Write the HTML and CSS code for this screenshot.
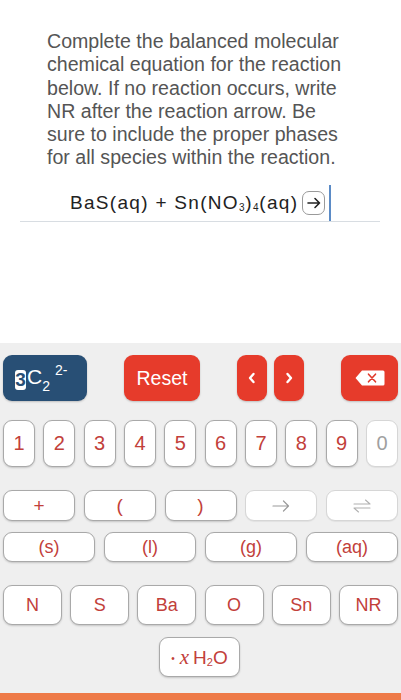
FILE: index.html
```html
<!DOCTYPE html>
<html>
<head>
<meta charset="utf-8">
<link rel="stylesheet" href="styles.css">
</head>
<body>
<div class="page">
  <div class="question">
    <p class="prompt">Complete the balanced molecular chemical equation for the reaction below. If no reaction occurs, write NR after the reaction arrow. Be sure to include the proper phases for all species within the reaction.</p>
    <div class="equation-wrap">
      <div class="equation">
        <span class="eq-text">BaS(aq) + Sn(NO<sub class="sm">3</sub>)<sub class="sm">4</sub>(aq)</span>
        <span class="arrow-box">
          <svg width="14" height="12" viewBox="0 0 14 12"><path d="M1 6 H12.5 M8 1.5 L12.5 6 L8 10.5" fill="none" stroke="#222" stroke-width="1.6" stroke-linecap="round" stroke-linejoin="round"/></svg>
        </span>
        <span class="cursor"></span>
      </div>
    </div>
  </div>

  <div class="keyboard">
    <div class="row row-top">
      <button class="key dark charge"><span class="charge-in"><span class="hl">3</span>C<sub class="csub">2</sub><sup class="csup">2-</sup></span></button>
      <button class="key red reset">Reset</button>
      <div class="nav">
        <button class="key red chev">
          <svg width="10" height="12" viewBox="0 0 10 12"><path d="M6.5 2 L3 6 L6.5 10" fill="none" stroke="#fff" stroke-width="2.4" stroke-linecap="round" stroke-linejoin="round"/></svg>
        </button>
        <button class="key red chev">
          <svg width="10" height="12" viewBox="0 0 10 12"><path d="M3.5 2 L7 6 L3.5 10" fill="none" stroke="#fff" stroke-width="2.4" stroke-linecap="round" stroke-linejoin="round"/></svg>
        </button>
      </div>
      <button class="key red bksp">
        <svg width="30" height="16" viewBox="0 0 30 16"><path d="M7 0.5 H28 a1.5 1.5 0 0 1 1.5 1.5 V14 a1.5 1.5 0 0 1 -1.5 1.5 H7 L0.5 8 Z" fill="#fff"/><path d="M13.5 4.2 L20.5 11.8 M20.5 4.2 L13.5 11.8" stroke="#e0392b" stroke-width="1.6" stroke-linecap="round"/></svg>
      </button>
    </div>

    <div class="row row-digits">
      <button class="key w digit">1</button>
      <button class="key w digit">2</button>
      <button class="key w digit">3</button>
      <button class="key w digit">4</button>
      <button class="key w digit">5</button>
      <button class="key w digit">6</button>
      <button class="key w digit">7</button>
      <button class="key w digit">8</button>
      <button class="key w digit">9</button>
      <button class="key w digit off">0</button>
    </div>

    <div class="row row-ops">
      <button class="key w op">+</button>
      <button class="key w op">(</button>
      <button class="key w op">)</button>
      <button class="key w op off">
        <svg width="18" height="12" viewBox="0 0 18 12"><path d="M1 6 H16.5 M11.5 1 L16.5 6 L11.5 11" fill="none" stroke="#9a9a9a" stroke-width="1.2" stroke-linecap="round" stroke-linejoin="round"/></svg>
      </button>
      <button class="key w op off">
        <svg width="18" height="14" viewBox="0 0 18 14"><path d="M1 5 H17 L12.5 1 M17 9 H1 L5.5 13" fill="none" stroke="#b0b0b0" stroke-width="1.1" stroke-linecap="round" stroke-linejoin="round"/></svg>
      </button>
    </div>

    <div class="row row-phase">
      <button class="key w phase">(s)</button>
      <button class="key w phase">(l)</button>
      <button class="key w phase">(g)</button>
      <button class="key w phase">(aq)</button>
    </div>

    <div class="row row-el">
      <button class="key w el">N</button>
      <button class="key w el">S</button>
      <button class="key w el">Ba</button>
      <button class="key w el">O</button>
      <button class="key w el">Sn</button>
      <button class="key w el">NR</button>
    </div>

    <div class="row row-water">
      <button class="key w water"><span class="water-in"><span class="dot">•</span><i class="x">x</i>H<sub class="wsub">2</sub>O</span></button>
    </div>
  </div>
  <div class="bottom-bar"></div>
</div>
</body>
</html>
```

FILE: styles.css
```css
* { box-sizing: border-box; }
html, body { margin: 0; padding: 0; }
body {
  width: 401px;
  height: 700px;
  overflow: hidden;
  font-family: "Liberation Sans", Arial, sans-serif;
  background: #fff;
}
.page {
  display: flex;
  flex-direction: column;
  height: 700px;
}
.question {
  height: 343px;
  background: #fff;
  padding-top: 30px;
}
.prompt {
  margin: 0 0 0 47px;
  width: 302px;
  font-size: 19.6px;
  line-height: 23.3px;
  color: #555;
}
.equation-wrap {
  margin: 14px 21px 0 20px;
  border-bottom: 1px solid #d8dde2;
  height: 38px;
  display: flex;
  align-items: center;
  padding-top: 2px;
}
.equation {
  margin-left: 50px;
  display: flex;
  align-items: center;
}
.eq-text {
  font-size: 19px;
  color: #222;
  letter-spacing: 1.3px;
}
.sm { font-size: 10px; vertical-align: -2px; letter-spacing: 0.8px; }
.arrow-box {
  margin-left: 4px;
  width: 23px;
  height: 24px;
  border: 1px solid #9a9a9a;
  border-radius: 7px;
  display: flex;
  align-items: center;
  justify-content: center;
}
.cursor {
  margin-left: 4px;
  width: 2px;
  height: 36px;
  background: #5b8bc6;
}
.keyboard {
  flex: 1;
  background: #efefef;
  padding: 12px 3px 0 3px;
}
.row {
  display: flex;
  justify-content: space-between;
}
.key {
  font-family: "Liberation Sans", Arial, sans-serif;
  border-radius: 9px;
  padding: 0;
  display: flex;
  align-items: center;
  justify-content: center;
  cursor: pointer;
}
.dark {
  background: #284f75;
  border: none;
  color: #fff;
  box-shadow: 0 1px 2px rgba(0,0,0,0.2);
}
.red {
  background: #e63b2b;
  border: none;
  color: #fff;
  box-shadow: 0 1px 2px rgba(0,0,0,0.2);
}
.w {
  background: #fff;
  border: 1px solid #a9a9a9;
  color: #c2403a;
  box-shadow: 0 1px 2px rgba(0,0,0,0.18);
}
.w.off {
  color: #a0a0a0;
  border-color: #d6d6d6;
  box-shadow: 0 1px 1px rgba(0,0,0,0.06);
}
.row-top { height: 46px; }
.charge {
  width: 84px;
  height: 46px;
  justify-content: flex-start;
  padding-left: 12px;
}
.charge-in {
  font-size: 21px;
  line-height: 1;
  display: block;
  white-space: nowrap;
}
.hl {
  background: #fff;
  color: #284f75;
  border-radius: 3px;
  width: 11px;
  height: 20px;
  display: inline-block;
  text-align: center;
  line-height: 20px;
  font-weight: bold;
  font-size: 19px;
  margin-right: 1px;
  vertical-align: -2px;
}
.csub { font-size: 14px; vertical-align: -7px; }
.csup { font-size: 14px; vertical-align: 9px; margin-left: 5px; }
.reset { width: 76px; height: 46px; font-size: 19.5px; }
.nav { display: flex; gap: 7px; }
.chev { width: 30px; height: 46px; }
.bksp { width: 57px; height: 46px; }

.row-digits { margin-top: 19px; height: 47px; }
.digit { width: 32px; height: 47px; font-size: 20px; }

.row-ops { margin-top: 23px; height: 31px; }
.op { width: 72px; height: 31px; font-size: 19px; }

.row-phase { margin-top: 11px; height: 30px; }
.phase { width: 92px; height: 30px; font-size: 18px; }

.row-el { margin-top: 23px; height: 40px; }
.el { width: 59px; height: 40px; font-size: 18px; }

.row-water { margin-top: 12px; height: 40px; justify-content: center; padding-right: 2px; }
.water { width: 81px; height: 40px; }
.water-in { font-size: 19px; white-space: nowrap; }
.dot { font-size: 10px; margin-right: 5px; vertical-align: 2px; }
.x { font-family: "Liberation Serif", serif; font-size: 21px; margin-right: 4px; }
.wsub { font-size: 11px; vertical-align: -2px; }

.bottom-bar {
  height: 7px;
  background: #ee7a48;
}
```
